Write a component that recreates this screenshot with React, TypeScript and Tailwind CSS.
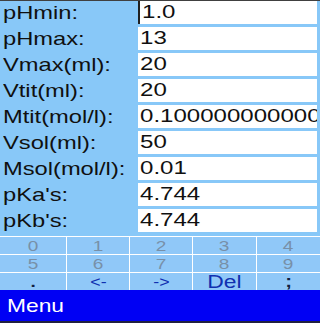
import React from "react";

const rows: [string, string][] = [
  ["pHmin:", "1.0"],
  ["pHmax:", "13"],
  ["Vmax(ml):", "20"],
  ["Vtit(ml):", "20"],
  ["Mtit(mol/l):", "0.100000000000"],
  ["Vsol(ml):", "50"],
  ["Msol(mol/l):", "0.01"],
  ["pKa's:", "4.744"],
  ["pKb's:", "4.744"],
];

const keys: { t: string; c: string }[] = [
  { t: "0", c: "text-[#7890a8] text-[15px]" },
  { t: "1", c: "text-[#7890a8] text-[15px]" },
  { t: "2", c: "text-[#7890a8] text-[15px]" },
  { t: "3", c: "text-[#7890a8] text-[15px]" },
  { t: "4", c: "text-[#7890a8] text-[15px]" },
  { t: "5", c: "text-[#7890a8] text-[15px]" },
  { t: "6", c: "text-[#7890a8] text-[15px]" },
  { t: "7", c: "text-[#7890a8] text-[15px]" },
  { t: "8", c: "text-[#7890a8] text-[15px]" },
  { t: "9", c: "text-[#7890a8] text-[15px]" },
  { t: ".", c: "text-[#102040] text-[15px] font-bold" },
  { t: "<-", c: "text-[#1030b0] text-[14px]" },
  { t: "->", c: "text-[#1030b0] text-[14px]" },
  { t: "Del", c: "text-[#1030b0] text-[18px]" },
  { t: ";", c: "text-[#102040] text-[16px] font-bold" },
];

export default function App() {
  return (
    <div
      className="w-[320px] h-[323px] overflow-hidden bg-[#88c8f8] flex flex-col border-t border-[#404040]"
      style={{ fontFamily: '"Liberation Sans", Arial, sans-serif' }}
    >
      <div className="flex flex-col">
        {rows.map(([l, v], i) => (
          <div key={i} className="flex h-[26px] items-start">
            <div className="w-[138px] h-[25px] flex items-center pl-[3px] whitespace-nowrap">
              <span className="inline-block origin-left scale-x-[1.28] text-[18.5px] leading-none text-[#101010]">
                {l}
              </span>
            </div>
            <div
              className={
                "w-[179px] h-[23px] bg-white flex items-center overflow-hidden whitespace-nowrap pl-[2px] " +
                (i === 0 ? "border-l-2 border-[#202020]" : "")
              }
            >
              <span className="inline-block origin-left scale-x-[1.3] text-[18.5px] leading-none text-[#101010]">
                {v}
              </span>
            </div>
          </div>
        ))}
      </div>
      <div className="mt-[1px] bg-white pt-[1px] grid grid-cols-[66px_62px_62px_63px_1fr] grid-rows-[17px_17px_17px] gap-[1px]">
        {keys.map((k, i) => (
          <div key={i} className="bg-[#90c8f8] flex items-center justify-center overflow-hidden">
            <span className={"inline-block scale-x-[1.27] leading-none " + k.c}>{k.t}</span>
          </div>
        ))}
      </div>
      <div className="flex-1 bg-[#0000f4] flex items-center pl-[7px] border-b-2 border-[#202040]">
        <span className="inline-block origin-left scale-x-[1.2] text-[19px] leading-none text-white">Menu</span>
      </div>
    </div>
  );
}
